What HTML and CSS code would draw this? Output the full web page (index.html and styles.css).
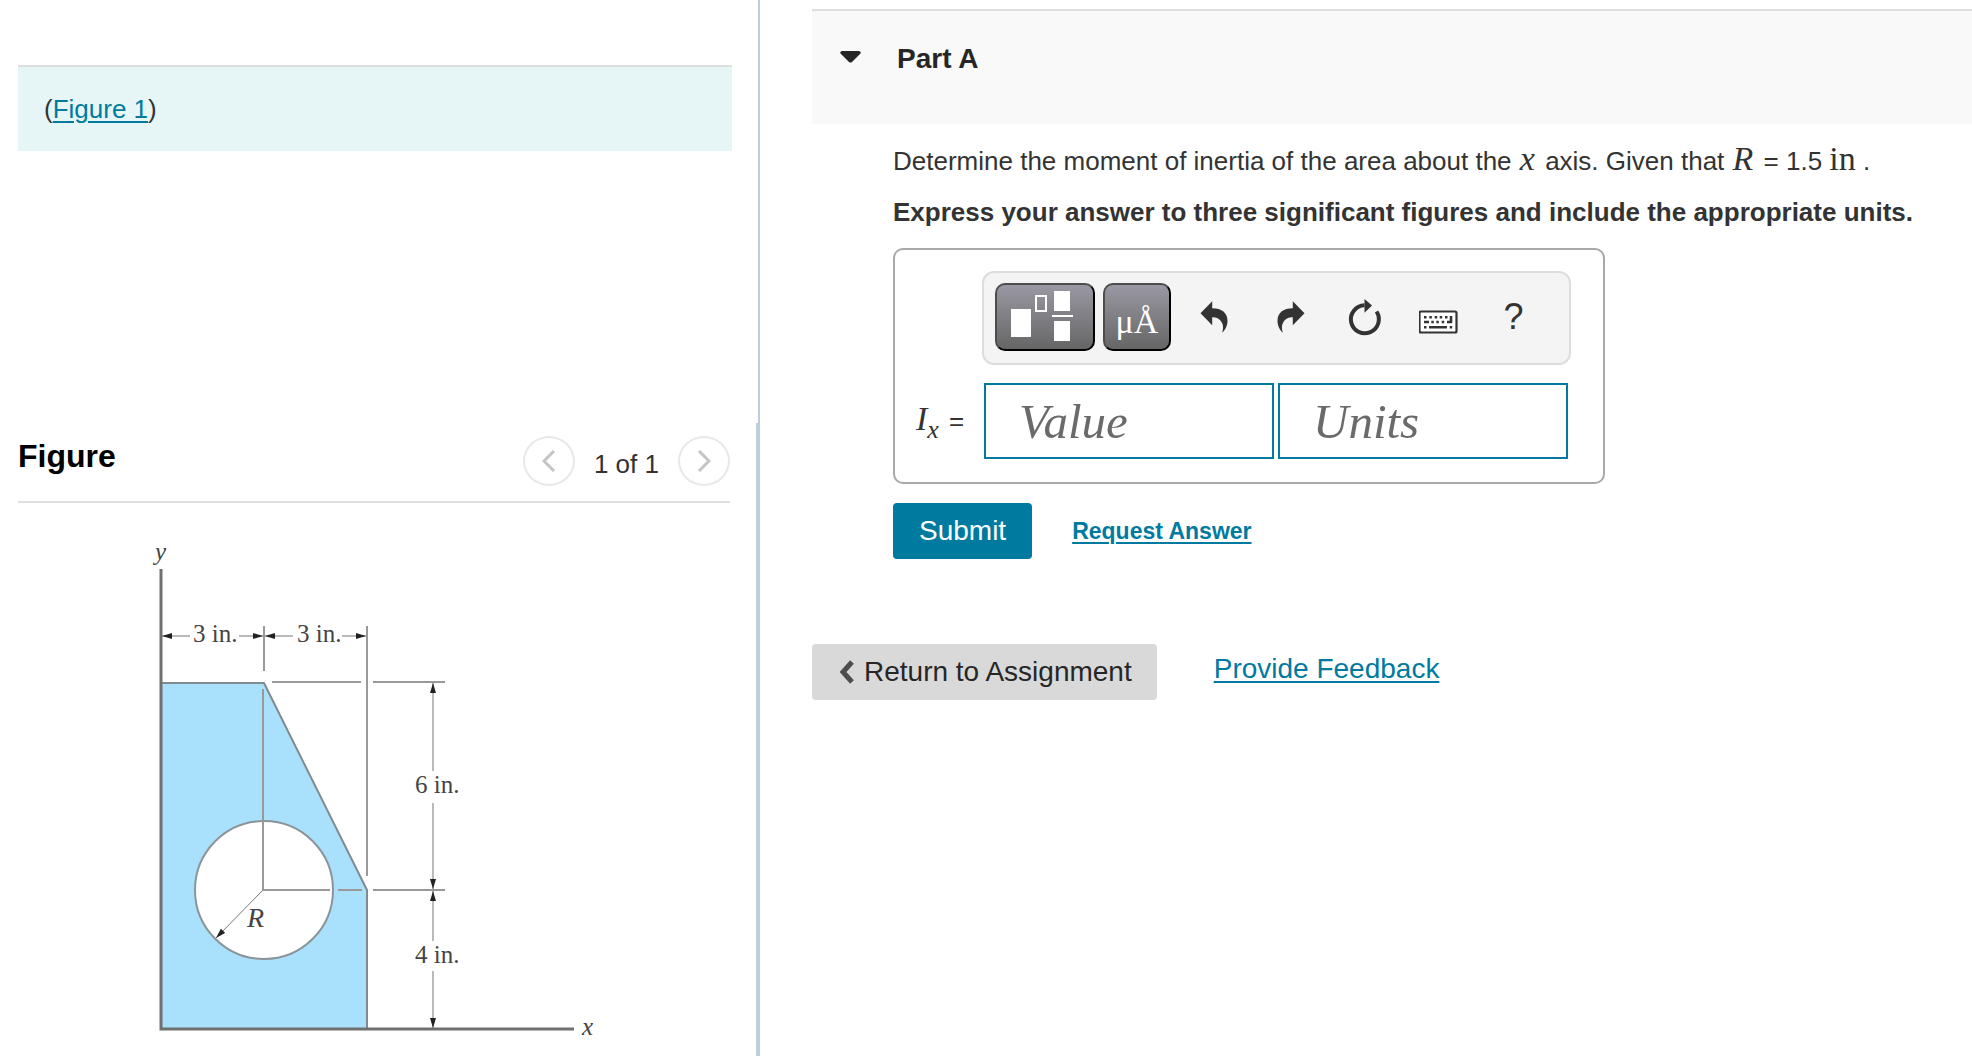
FILE: index.html
```html
<!DOCTYPE html>
<html lang="en">
<head>
    <meta charset="UTF-8">
    <meta name="viewport" content="width=device-width, initial-scale=1.0">
    <title>Part A</title>
    <link rel="stylesheet" href="styles.css">
</head>
<body>
    <div class="page">
        <aside class="sidebar">
            <section class="intro">
                <p class="intro-box">(<a href="#figure">Figure 1</a>)</p>
            </section>

            <section class="figure-panel" id="figure">
                <header class="figure-header">
                    <h2>Figure</h2>
                    <div class="pager">
                        <button type="button" class="pager-btn" aria-label="Previous figure">
                            <svg width="14" height="22" viewBox="0 0 14 22"><path d="M12 1 L2 11 L12 21"/></svg>
                        </button>
                        <span class="pager-count">1 of 1</span>
                        <button type="button" class="pager-btn" aria-label="Next figure">
                            <svg width="14" height="22" viewBox="0 0 14 22"><path d="M2 1 L12 11 L2 21"/></svg>
                        </button>
                    </div>
                </header>

                <svg class="diagram" width="480" height="516" viewBox="0 0 480 516">
                    <defs>
                        <marker id="arrow" viewBox="0 0 10 6" refX="10" refY="3" markerWidth="10" markerHeight="6" markerUnits="userSpaceOnUse" orient="auto-start-reverse">
                            <path d="M0 0 L10 3 L0 6 Z" fill="#222"/>
                        </marker>
                    </defs>

                    <!-- shaded area with the hole -->
                    <path class="area" d="M31 153 H134 L237 360 V499 H31 Z"/>
                    <circle class="hole" cx="134" cy="360" r="69"/>

                    <!-- axes -->
                    <path class="axis" d="M31 39 V499 H444"/>

                    <!-- extension lines -->
                    <path class="thin" d="M134 96 V141 M237 96 V346 M142 152 H231 M243 152 H315"/>
                    <path class="thin" d="M133 159 V360 H200 M208 360 H232 M243 360 H315"/>

                    <!-- dimensions -->
                    <g class="dim">
                        <path d="M60 106 H32" marker-end="url(#arrow)"/>
                        <path d="M109 106 H133" marker-end="url(#arrow)"/>
                        <path d="M163 106 H135" marker-end="url(#arrow)"/>
                        <path d="M212 106 H236" marker-end="url(#arrow)"/>
                        <path d="M303 241 V153" marker-end="url(#arrow)"/>
                        <path d="M303 273 V359" marker-end="url(#arrow)"/>
                        <path d="M303 411 V361" marker-end="url(#arrow)"/>
                        <path d="M303 441 V498" marker-end="url(#arrow)"/>
                        <path d="M133 360 L86 408" marker-end="url(#arrow)"/>
                    </g>

                    <g class="dim-text">
                        <text x="63" y="112">3 in.</text>
                        <text x="167" y="112">3 in.</text>
                        <text x="285" y="263">6 in.</text>
                        <text x="285" y="433">4 in.</text>
                        <text class="var" x="25" y="30">y</text>
                        <text class="var" x="452" y="505">x</text>
                        <text class="var radius" x="117" y="397">R</text>
                    </g>
                </svg>
            </section>
        </aside>

        <main class="content">
            <header class="part-header">
                <svg width="21" height="12" viewBox="0 0 21 12"><path d="M2 0 H19 Q22 1 20 3 L12 11 Q10.500 12 9 11 L1 3 Q-1 1 2 0 Z" fill="#262626"/></svg>
                <h1>Part A</h1>
            </header>

            <div class="part-body">
                <p>Determine the moment of inertia of the area about the <i class="math">x</i> axis. Given that <i class="math">R</i> = 1.5 <span class="math-unit">in</span> .</p>
                <p class="instructions">Express your answer to three significant figures and include the appropriate units.</p>

                <form id="answer-form" class="answer-box">
                    <div class="toolbar">
                        <button type="button" class="tool-btn tool-wide" aria-label="Templates">
                            <svg width="96" height="64" viewBox="2 2 96 64">
                                <rect x="16" y="26" width="20" height="28" fill="#fff"/>
                                <rect x="41" y="13" width="10" height="15" fill="none" stroke="#fff" stroke-width="2"/>
                                <rect x="59" y="8" width="16" height="20" fill="#fff"/>
                                <rect x="57" y="32" width="21" height="2" fill="#fff"/>
                                <rect x="59" y="38" width="16" height="20" fill="#fff"/>
                            </svg>
                        </button>
                        <button type="button" class="tool-btn tool-symbols" aria-label="Symbols">μÅ</button>
                        <div class="tool-icons">
                            <button type="button" class="icon-btn" aria-label="Undo">
                                <svg width="40" height="40" viewBox="0 0 40 40"><path fill="#333" d="M6.500 16.300 L18.200 4.300 V11.300 C28 11.300 33.500 16 33.500 24 C33.500 29 31 33 28.200 35.700 C29.500 31 29.500 28 27.500 25 C25.500 21.500 22 20.300 18.200 20.300 V28.300 Z"/></svg>
                            </button>
                            <button type="button" class="icon-btn" aria-label="Redo">
                                <svg width="40" height="40" viewBox="-2 0 40 40"><path fill="#333" d="M33.500 16.300 L21.800 4.300 V11.300 C12 11.300 6.500 16 6.500 24 C6.500 29 9 33 11.800 35.700 C10.500 31 10.500 28 12.500 25 C14.500 21.500 18 20.300 21.800 20.300 V28.300 Z"/></svg>
                            </button>
                            <button type="button" class="icon-btn" aria-label="Reset">
                                <svg width="40" height="40" viewBox="0 0 40 40">
                                    <path fill="none" stroke="#333" stroke-width="4" d="M32.500 14.500 A14 14 0 1 1 20.500 8.300"/>
                                    <path fill="#333" d="M20.500 2 L28 8.500 L20.500 15.700 Z"/>
                                </svg>
                            </button>
                            <button type="button" class="icon-btn" aria-label="Keyboard shortcuts">
                                <svg width="40" height="40" viewBox="1 0 40 40">
                                    <rect x="1.500" y="14.500" width="37" height="21" rx="1.500" fill="#fff" stroke="#333" stroke-width="2.200"/>
                                    <path fill="#333" d="M6 19h2.500v2.500h-2.500z M11.300 19h2.500v2.500h-2.500z M16.700 19h2.500v2.500h-2.500z M21.700 19h2.500v2.500h-2.500z M27 19h2.500v2.500h-2.500z M31.700 19h2.600v7.300h-5.300v-2.600h2.700z M6 23.700h5v2.500h-5z M13.300 23.700h2.500v2.500h-2.500z M18.300 23.700h2.500v2.500h-2.500z M23.700 23.700h2.500v2.500h-2.500z M6 29h2.500v2.500h-2.500z M11 29h18v2.500h-18z M31.700 29h2.500v2.500h-2.500z"/>
                                </svg>
                            </button>
                            <button type="button" class="icon-btn" aria-label="Help">?</button>
                        </div>
                    </div>

                    <label class="answer-label" for="value"><i class="math">I<sub>x</sub></i> =</label>
                    <div class="answer-fields">
                        <input type="text" id="value" placeholder="Value">
                        <input type="text" id="units" placeholder="Units" aria-label="Units">
                    </div>
                </form>

                <div class="actions">
                    <button type="submit" form="answer-form" class="submit-btn">Submit</button>
                    <a href="#" class="request-link">Request Answer</a>
                </div>
            </div>

            <footer class="part-footer">
                <button type="button" class="return-btn">
                    <svg width="15" height="24" viewBox="0 0 15 24"><path d="M13 2 L4 12 L13 22"/></svg>
                    Return to Assignment
                </button>
                <a href="#" class="feedback-link">Provide Feedback</a>
            </footer>
        </main>
    </div>
</body>
</html>
```

FILE: styles.css
```css
* {
    box-sizing: border-box;
}
body {
    margin: 0;
    font-family: "Liberation Sans", Arial, sans-serif;
    font-size: 26px;
    line-height: 30px;
    color: #333;
    background-color: #fff;
}
h1, h2, p {
    margin: 0;
}
a {
    color: #007b9f;
    text-decoration-thickness: 2px;
    text-underline-offset: 3px;
}
button {
    font-family: inherit;
    cursor: pointer;
}
svg {
    display: block;
}
.page {
    display: grid;
    grid-template-columns: minmax(0, 760fr) minmax(0, 1212fr);
    min-height: 100vh;
}

/* left column */
.sidebar {
    display: flex;
    flex-direction: column;
}
.intro {
    min-height: 423px;
    padding: 65px 26px 0 18px;
    border-right: 2px solid #bccde0;
}
.intro-box {
    padding: 27px 26px;
    border-top: 2px solid #dfdfdf;
    background-color: #e6f6f7;
}
.figure-panel {
    flex: 1;
    padding: 13px 26px 0 18px;
    border-right: 4px solid #bccde0;
}
.figure-header {
    display: flex;
    justify-content: space-between;
    align-items: flex-start;
    padding-bottom: 15px;
    border-bottom: 2px solid #dfdfdf;
}
.figure-header h2 {
    padding-top: 2px;
    font-size: 32px;
    line-height: 36px;
    color: #000;
}
.pager {
    display: flex;
    align-items: center;
    gap: 19px;
}
.pager-btn {
    display: flex;
    align-items: center;
    justify-content: center;
    width: 52px;
    height: 50px;
    padding: 0;
    border: 2px solid #e8e8e8;
    border-radius: 50%;
    background-color: #fff;
}
.pager-btn path {
    fill: none;
    stroke: #c4c4c4;
    stroke-width: 3;
}
.pager-count {
    padding-top: 6px;
}

/* figure drawing */
.diagram {
    margin: 27px 0 0 112px;
}
.area {
    fill: #a9e0fc;
    stroke: #808a90;
    stroke-width: 2;
}
.hole {
    fill: #fff;
    stroke: #8a9499;
    stroke-width: 2;
}
.axis {
    fill: none;
    stroke: #707070;
    stroke-width: 3;
}
.thin {
    fill: none;
    stroke: #999;
    stroke-width: 2;
}
.dim path {
    stroke: #777;
    stroke-width: 1;
}
.dim-text {
    font-family: "Liberation Serif", "Times New Roman", serif;
    font-size: 25px;
    fill: #444;
}
.var {
    font-style: italic;
}
.radius {
    font-size: 28px;
}

/* right column */
.content {
    padding: 9px 0 0 52px;
}
.part-header {
    display: flex;
    align-items: center;
    gap: 36px;
    padding: 32px 28px 49px;
    border-top: 2px solid #dedede;
    background-color: #f9f9f9;
}
.part-header h1 {
    font-size: 28px;
    line-height: 32px;
    color: #262626;
}
.part-header svg {
    margin-bottom: 4px;
}
.part-body {
    padding: 22px 0 0 81px;
}
.math, .math-unit {
    font-family: "Liberation Serif", "Times New Roman", serif;
    font-size: 34px;
    line-height: 1px;
}
.math {
    margin: 0 3px 0 1px;
}
.math sub {
    font-size: 26px;
}
.instructions {
    margin-top: 21px;
    font-weight: bold;
}
.answer-box {
    display: grid;
    grid-template-columns: 87px auto;
    row-gap: 18px;
    width: fit-content;
    margin-top: 21px;
    padding: 21px 32px 23px 0;
    border: 2px solid #a9a9a9;
    border-radius: 10px;
}
.toolbar {
    grid-column: 2;
    display: flex;
    gap: 8px;
    padding: 10px 11px 12px;
    border: 2px solid #ddd;
    border-radius: 12px;
    background-color: #f4f4f4;
}
.tool-btn {
    width: 68px;
    height: 68px;
    padding: 0;
    border: 2px solid;
    border-color: #4d4d4d #000 #000 #4d4d4d;
    border-radius: 10px;
    background: linear-gradient(#9a98a3, #666);
    color: #fff;
    font-family: "Liberation Serif", "Times New Roman", serif;
    font-size: 34px;
}
.tool-wide {
    width: 100px;
}
.tool-symbols {
    padding-top: 9px;
}
.tool-icons {
    display: flex;
    align-items: center;
    margin-left: -3px;
    padding-right: 7px;
}
.icon-btn {
    display: flex;
    align-items: center;
    justify-content: center;
    width: 75px;
    height: 68px;
    padding: 0;
    border: none;
    background: none;
    color: #333;
    font-size: 36px;
}
.answer-label {
    align-self: center;
    padding-left: 20px;
}
.answer-fields {
    display: flex;
    gap: 4px;
    padding: 0 2px;
}
.answer-fields input {
    width: 290px;
    height: 76px;
    padding: 0 33px;
    border: 2px solid #007b9f;
    border-radius: 0;
    color: #333;
    font-family: "Liberation Serif", "Times New Roman", serif;
    font-size: 49px;
}
.answer-fields input::placeholder {
    color: #6a6a6a;
    font-style: italic;
}
.actions {
    display: flex;
    align-items: center;
    gap: 40px;
    margin-top: 19px;
}
.submit-btn, .return-btn {
    height: 56px;
    border: none;
    border-radius: 4px;
    font-size: 28px;
}
.submit-btn {
    padding: 0 26px;
    background-color: #007b9f;
    color: #fff;
}
.request-link {
    font-size: 23px;
    font-weight: bold;
}
.part-footer {
    display: flex;
    align-items: center;
    gap: 57px;
    margin-top: 85px;
}
.return-btn {
    display: flex;
    align-items: center;
    gap: 10px;
    padding: 0 25px 0 27px;
    background-color: #d9d9d9;
    color: #262626;
}
.return-btn path {
    fill: none;
    stroke: #4d4d4d;
    stroke-width: 5;
}
.feedback-link {
    padding-bottom: 6px;
    font-size: 28px;
}
```
